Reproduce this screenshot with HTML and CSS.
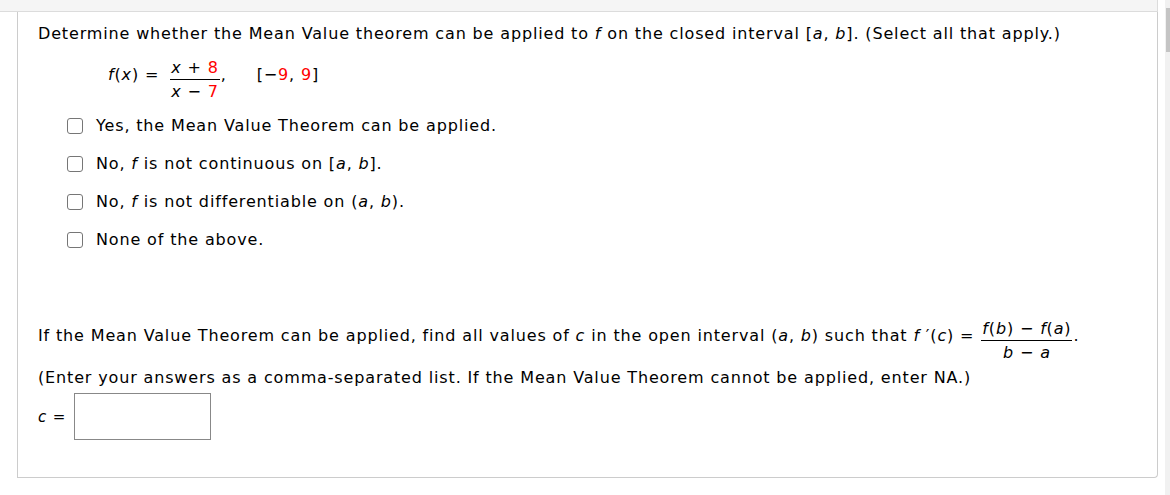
FILE: index.html
```html
<!DOCTYPE html>
<html lang="en">
<head>
<meta charset="utf-8">
<title>Mean Value Theorem</title>
<link rel="stylesheet" href="styles.css">
</head>
<body>
<div class="page">
  <div class="content">
    <div class="strip"></div>
    <div class="panel">
      <p class="q">Determine whether the Mean Value theorem can be applied to <i>f</i> on the closed interval [<i>a</i>, <i>b</i>]. (Select all that apply.)</p>
      <div class="formula"><span class="m"><i>f</i>(<i>x</i>)</span><span class="eq">=</span><span class="frac"><span class="num"><i>x</i> + <span class="red">8</span></span><span class="den"><i>x</i> − <span class="red">7</span></span></span><span class="m">,</span><span class="m interval">[−<span class="red">9</span>, <span class="red">9</span>]</span></div>
      <ul class="opts">
        <li><span class="box"></span><span>Yes, the Mean Value Theorem can be applied.</span></li>
        <li><span class="box"></span><span>No, <i>f</i> is not continuous on [<i>a</i>, <i>b</i>].</span></li>
        <li><span class="box"></span><span>No, <i>f</i> is not differentiable on (<i>a</i>, <i>b</i>).</span></li>
        <li><span class="box"></span><span>None of the above.</span></li>
      </ul>
      <p class="q2">If the Mean Value Theorem can be applied, find all values of <i>c</i> in the open interval (<i>a</i>, <i>b</i>) such that <i>f</i> ′(<i>c</i>) = <span class="frac"><span class="num"><i>f</i>(<i>b</i>) − <i>f</i>(<i>a</i>)</span><span class="den"><i>b</i> − <i>a</i></span></span>.</p>
      <p class="note">(Enter your answers as a comma-separated list. If the Mean Value Theorem cannot be applied, enter NA.)</p>
      <div class="answer"><span class="m"><i>c</i> =</span><span class="input"></span></div>
    </div>
  </div>
  <div class="gutter"></div>
  <div class="scroll"><div class="thumb"></div></div>
</div>
</body>
</html>
```

FILE: styles.css
```css
html, body {
  margin: 0;
  padding: 0;
  background: #fff;
}
body {
  font-family: "DejaVu Sans", Verdana, sans-serif;
  font-size: 16px;
  line-height: 20px;
  letter-spacing: 0.85px;
  color: #000;
}
.page {
  display: flex;
  height: 495px;
  overflow: hidden;
}
.content {
  width: 1158px;
  flex: none;
}
.strip {
  height: 12px;
  box-sizing: border-box;
  background: #f5f5f5;
  border-bottom: 1px solid #dcdcdc;
  border-right: 1px solid #dcdcdc;
}
.panel {
  margin-left: 17px;
  height: 466px;
  box-sizing: border-box;
  border: 1px solid #cccccc;
  border-top: none;
  border-bottom-right-radius: 4px;
  padding: 12px 0 0 20px;
}
.gutter {
  width: 7px;
  flex: none;
}
.scroll {
  width: 5px;
  flex: none;
  background: #f1f1f1;
}
.thumb {
  margin: 8px 0 0 1px;
  height: 44px;
  background: #c4c4c4;
}
p {
  margin: 0;
}
i {
  font-style: italic;
}
.red {
  color: #ff0000;
}
.formula {
  margin: 15px 0 0 70px;
}
.eq {
  margin: 0 10px 0 6px;
}
.frac {
  display: inline-flex;
  flex-direction: column;
  align-items: center;
  vertical-align: 7px;
  line-height: 17px;
  padding: 0 1px;
}
.num {
  padding: 0 1px 3px;
  border-bottom: 1px solid #000;
  align-self: stretch;
  text-align: center;
}
.den {
  padding-top: 3px;
}
.interval {
  margin-left: 30px;
}
.opts {
  list-style: none;
  margin: 16px 0 0 29px;
  padding: 0;
  display: flex;
  flex-direction: column;
  gap: 18px;
}
.opts li {
  display: flex;
  align-items: center;
  height: 20px;
  gap: 13px;
}
.box {
  width: 16px;
  height: 16px;
  box-sizing: border-box;
  border: 1px solid #767676;
  border-radius: 3px;
  background: #fff;
  flex: none;
}
.q2 {
  margin-top: 70px;
}
.note {
  margin-top: 7px;
}
.answer {
  margin-top: 5px;
  display: flex;
  align-items: center;
  gap: 8px;
  font-size: 15px;
}
.input {
  width: 137px;
  height: 47px;
  box-sizing: border-box;
  border: 1px solid #888888;
  background: #fff;
}
```
